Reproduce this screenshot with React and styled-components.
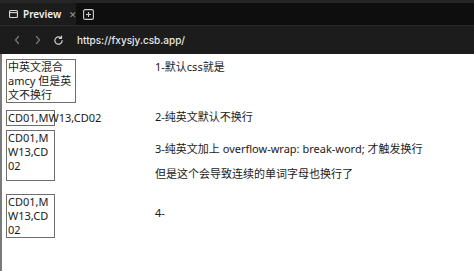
import React from "react";
import styled, { createGlobalStyle } from "styled-components";

const Global = createGlobalStyle`
  html, body { margin: 0; padding: 0; background: #fff; }
  body { width: 474px; height: 271px; overflow: hidden; }
`;

const Frame = styled.div`
  width: 474px;
  height: 271px;
  display: flex;
  flex-direction: column;
  font-family: "Noto Sans", "Noto Sans CJK SC", sans-serif;
`;

const TabBar = styled.div`
  height: 22px;
  border-top: 3px solid #262626;
  background: #0e0e0e;
  display: flex;
  align-items: stretch;
`;

const Tab = styled.div`
  width: 76px;
  flex: none;
  background: #1c1c1c;
  display: flex;
  align-items: center;
  padding-left: 9px;
  box-sizing: border-box;
  color: #f0f0f0;
  font-size: 10px;
  font-weight: 600;
  white-space: nowrap;

  svg { flex: none; margin-right: 5px; }
`;

const Close = styled.span`
  margin-left: 8px;
  color: #9a9a9a;
  font-size: 9px;
  font-weight: 400;
`;

const NewTab = styled.div`
  display: flex;
  align-items: center;
  padding-left: 7px;
`;

const AddressBar = styled.div`
  height: 28px;
  border-top: 1px solid #2a2a2a;
  background: #1c1c1c;
  display: flex;
  align-items: center;
  padding-left: 6px;
`;

const NavBtn = styled.div`
  width: 21px;
  display: flex;
  align-items: center;
  justify-content: center;
`;

const Url = styled.span`
  margin-left: 8px;
  color: #e8e8e8;
  font-size: 10px;
  font-family: "Inter", "Noto Sans", sans-serif;
  font-weight: 500;
`;

const Page = styled.div`
  flex: 1;
  border-left: 2px solid #7a7a7a;
  background: #fff;
  color: #1a1a1a;
  font-size: 11px;
  line-height: 14px;
  padding: 5px 0 0 4px;
  display: flex;
  flex-direction: column;
`;

const Row = styled.div`
  display: flex;
  margin-bottom: ${(p) => p.$gap}px;
`;

const Box = styled.div`
  width: ${(p) => p.$w}px;
  flex: none;
  border: 1px solid #6e6e6e;
  box-sizing: border-box;
  padding: 0 0 0 1px;
  white-space: ${(p) => (p.$nowrap ? "nowrap" : "normal")};
  overflow-wrap: ${(p) => (p.$breakWord ? "break-word" : "normal")};
  word-break: ${(p) => (p.$breakAll ? "break-all" : "normal")};
`;

const Notes = styled.div`
  margin-left: ${(p) => 149 - p.$w}px;
  padding-top: ${(p) => p.$top}px;
  display: flex;
  flex-direction: column;
  gap: 11px;
  white-space: nowrap;
`;

const Note = styled.p`
  margin: 0;
`;

const WindowIcon = () => (
  <svg width="9" height="8" viewBox="0 0 9 8" fill="none" stroke="#d8d8d8" strokeWidth="1.1">
    <rect x="0.55" y="0.55" width="7.9" height="6.9" rx="1" />
    <line x1="0.55" y1="2.6" x2="8.45" y2="2.6" />
  </svg>
);

const PlusIcon = () => (
  <svg width="11" height="11" viewBox="0 0 11 11" fill="none" stroke="#cfcfcf" strokeWidth="1.1">
    <rect x="0.6" y="0.6" width="9.8" height="9.8" rx="1.5" />
    <line x1="5.5" y1="3" x2="5.5" y2="8" />
    <line x1="3" y1="5.5" x2="8" y2="5.5" />
  </svg>
);

const Chevron = ({ dir }) => (
  <svg width="8" height="10" viewBox="0 0 8 10" fill="none" stroke="#7a7a7a" strokeWidth="1.2" strokeLinecap="round" strokeLinejoin="round">
    {dir === "left" ? <polyline points="5.5,1.5 2.5,5 5.5,8.5" /> : <polyline points="2.5,1.5 5.5,5 2.5,8.5" />}
  </svg>
);

const Refresh = () => (
  <svg width="11" height="11" viewBox="0 0 12 12" fill="none" stroke="#cfcfcf" strokeWidth="1.3" strokeLinecap="round" strokeLinejoin="round">
    <path d="M10 6a4 4 0 1 1-1.2-2.85" />
    <polyline points="9.3,1.2 9.3,3.6 6.9,3.6" />
  </svg>
);

export default function App() {
  return (
    <>
      <Global />
      <Frame>
        <TabBar>
          <Tab>
            <WindowIcon />
            <span>Preview</span>
            <Close>✕</Close>
          </Tab>
          <NewTab>
            <PlusIcon />
          </NewTab>
        </TabBar>
        <AddressBar>
          <NavBtn><Chevron dir="left" /></NavBtn>
          <NavBtn><Chevron dir="right" /></NavBtn>
          <NavBtn><Refresh /></NavBtn>
          <Url>https://fxysjy.csb.app/</Url>
        </AddressBar>
        <Page>
          <Row $gap={7}>
            <Box $w={70}>中英文混合 amcy 但是英文不换行</Box>
            <Notes $w={70} $top={1}>
              <Note>1-默认css就是</Note>
            </Notes>
          </Row>
          <Row $gap={4}>
            <Box $w={49} $nowrap>CD01,MW13,CD02</Box>
            <Notes $w={49} $top={0}>
              <Note>2-纯英文默认不换行</Note>
            </Notes>
          </Row>
          <Row $gap={13}>
            <Box $w={49} $breakWord>CD01,MW13,CD02</Box>
            <Notes $w={49} $top={12}>
              <Note>3-纯英文加上 overflow-wrap: break-word; 才触发换行</Note>
              <Note>但是这个会导致连续的单词字母也换行了</Note>
            </Notes>
          </Row>
          <Row $gap={0}>
            <Box $w={49} $breakAll>CD01,MW13,CD02</Box>
            <Notes $w={49} $top={12}>
              <Note>4-</Note>
            </Notes>
          </Row>
        </Page>
      </Frame>
    </>
  );
}
